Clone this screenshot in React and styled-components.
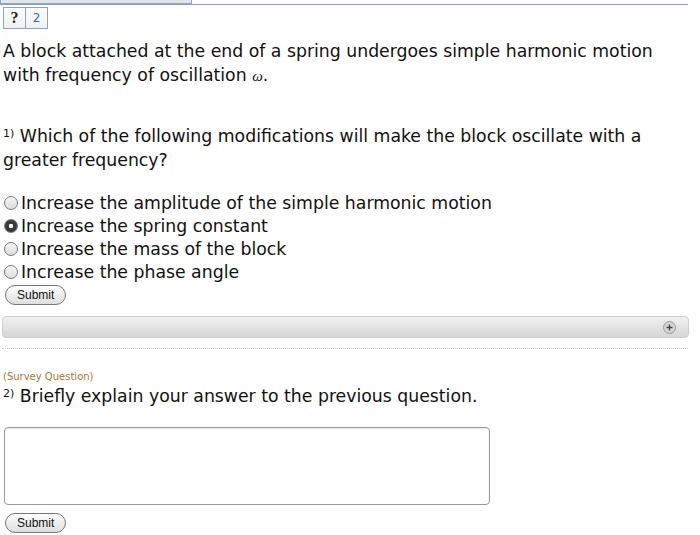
import React from "react";
import styled, { createGlobalStyle } from "styled-components";

const Global = createGlobalStyle`
  body {
    margin: 0;
    background: #fff;
    font-family: "DejaVu Sans", Verdana, sans-serif;
    color: #111;
  }
`;

const options = [
  { label: "Increase the amplitude of the simple harmonic motion" },
  { label: "Increase the spring constant", checked: true },
  { label: "Increase the mass of the block" },
  { label: "Increase the phase angle" },
];

const App = () => {
  return (
    <Page>
      <Global />
      <TabStrip>
        <TabBox />
      </TabStrip>
      <Pager>
        <PageBtn bold>?</PageBtn>
        <PageBtn blue>2</PageBtn>
      </Pager>

      <Intro>
        A block attached at the end of a spring undergoes simple harmonic motion
        with frequency of oscillation <Omega>ω</Omega>.
      </Intro>

      <Question>
        <Num>1)</Num> Which of the following modifications will make the block
        oscillate with a greater frequency?
      </Question>

      <Options>
        {options.map((o) => (
          <Option key={o.label}>
            <Radio checked={o.checked} />
            {o.label}
          </Option>
        ))}
      </Options>
      <SubmitBtn top={2}>Submit</SubmitBtn>

      <Bar>
        <PlusIcon>
          <svg width="13" height="13" viewBox="0 0 13 13">
            <circle cx="6.5" cy="6.5" r="6" fill="#d4d4d4" stroke="#9a9a9a" />
            <path d="M6.5 3.5v6M3.5 6.5h6" stroke="#444" strokeWidth="1.4" />
          </svg>
        </PlusIcon>
      </Bar>
      <Dotted />

      <Survey>(Survey Question)</Survey>
      <Question2>
        <Num>2)</Num> Briefly explain your answer to the previous question.
      </Question2>
      <Answer />
      <SubmitBtn top={8}>Submit</SubmitBtn>
    </Page>
  );
};

const Page = styled.div`
  width: 700px;
  height: 535px;
  overflow: hidden;
  position: relative;
`;

const TabStrip = styled.div`
  width: 688px;
  height: 4px;
  border-bottom: 1px solid #8ea3bf;
  display: flex;
`;

const TabBox = styled.div`
  width: 190px;
  height: 3px;
  background: #e4e4e4;
  border: 1px solid #8ea3bf;
  border-top: none;
`;

const Pager = styled.div`
  display: flex;
  margin: 2px 0 0 3px;
`;

const PageBtn = styled.div`
  width: 23px;
  height: 22px;
  box-sizing: border-box;
  border: 1px solid #8ea3bf;
  margin-left: -1px;
  background: linear-gradient(#fdfdfd, #eef0f3);
  display: flex;
  align-items: center;
  justify-content: center;
  font-family: ${(p) => (p.bold ? '"Liberation Serif", serif' : '"DejaVu Sans", sans-serif')};
  font-weight: ${(p) => (p.bold ? 700 : 400)};
  font-size: ${(p) => (p.bold ? "16px" : "12px")};
  color: ${(p) => (p.blue ? "#2f6db5" : "#222")};
  &:first-child {
    margin-left: 0;
  }
`;

const Intro = styled.p`
  margin: 10px 0 0 3px;
  font-size: 17.3px;
  line-height: 24px;
  width: 680px;
`;

const Omega = styled.span`
  font-family: "Liberation Serif", serif;
  font-style: italic;
  font-size: 15px;
`;

const Question = styled.p`
  margin: 34px 0 0 3px;
  font-size: 17.3px;
  line-height: 24px;
  width: 670px;
`;

const Num = styled.span`
  font-size: 11px;
  vertical-align: 5px;
`;

const Options = styled.div`
  margin-top: 19px;
  display: flex;
  flex-direction: column;
`;

const Option = styled.label`
  display: flex;
  align-items: center;
  height: 23px;
  font-size: 17.3px;
  padding-left: 4px;
`;

const Radio = styled.span`
  width: 14px;
  height: 14px;
  border-radius: 50%;
  box-sizing: border-box;
  border: 1px solid #7a7a7a;
  background: ${(p) =>
    p.checked
      ? "radial-gradient(circle, #f4f4f4 0 2px, #3a3a3a 2.5px)"
      : "linear-gradient(#f6f6f6, #dcdcdc)"};
  margin-right: 3px;
  flex-shrink: 0;
`;

const SubmitBtn = styled.button`
  display: block;
  margin: ${(p) => p.top}px 0 0 5px;
  height: 20px;
  padding: 0 11px;
  border: 1px solid #777;
  border-radius: 10px;
  background: linear-gradient(#fefefe, #dedede);
  font-family: "Liberation Sans", Arial, sans-serif;
  font-size: 12px;
  color: #111;
`;

const Bar = styled.div`
  margin: 11px 0 0 2px;
  width: 687px;
  height: 22px;
  box-sizing: border-box;
  border: 1px solid #cfcfcf;
  border-radius: 4px;
  background: linear-gradient(#f1f1f1, #d6d6d6);
  display: flex;
  align-items: center;
  justify-content: flex-end;
  padding-right: 12px;
`;

const PlusIcon = styled.span`
  display: flex;
`;

const Dotted = styled.div`
  margin: 10px 0 0 2px;
  width: 686px;
  border-top: 1px dotted #c8c8c8;
`;

const Survey = styled.div`
  margin: 22px 0 0 3px;
  font-size: 10px;
  color: #a8773a;
`;

const Question2 = styled.p`
  margin: 0 0 0 3px;
  font-size: 17.3px;
  line-height: 24px;
`;

const Answer = styled.div`
  margin: 19px 0 0 4px;
  width: 486px;
  height: 78px;
  box-sizing: border-box;
  border: 1px solid #999;
  border-radius: 4px;
  box-shadow: inset 0 1px 2px rgba(0, 0, 0, 0.1);
`;

export default App;
